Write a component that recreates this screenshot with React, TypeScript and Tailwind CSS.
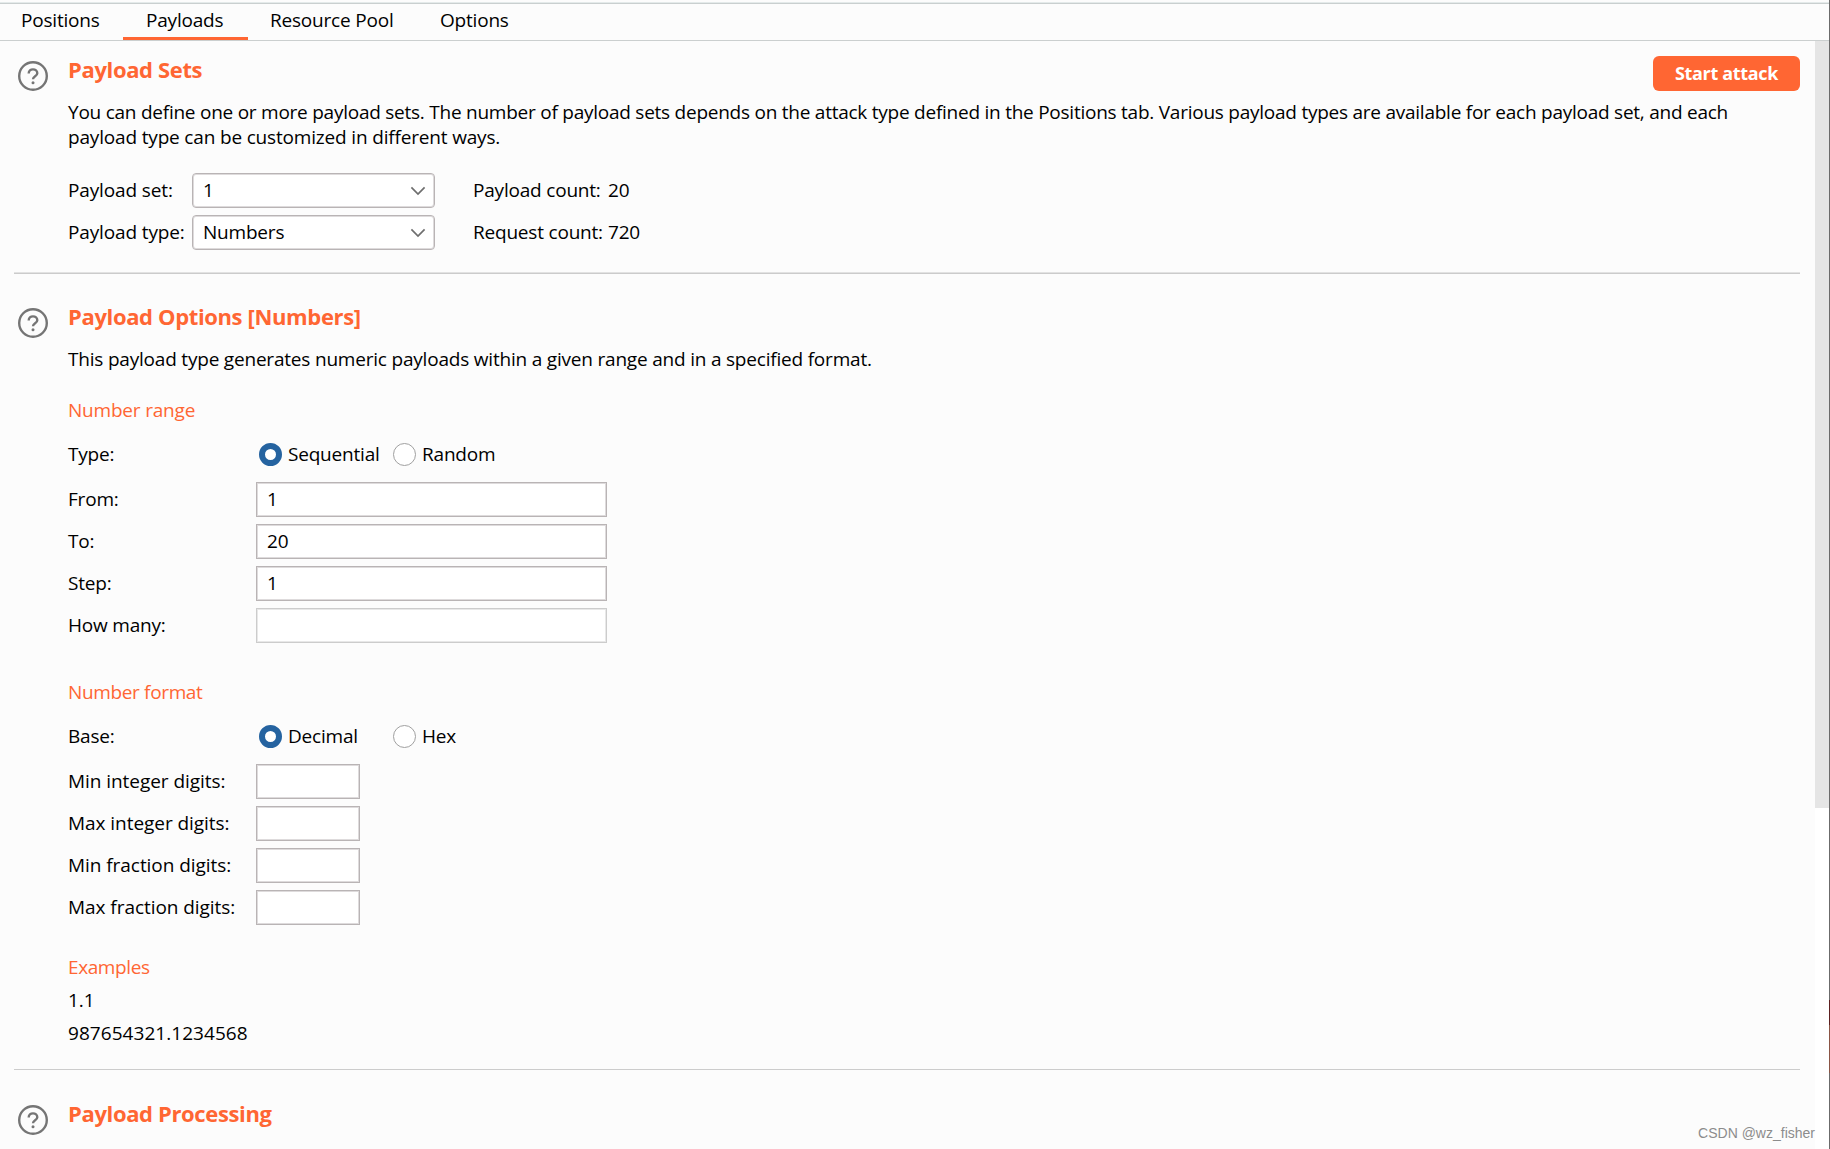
import type { ReactNode } from 'react';

const tabs = [
    { name: 'Positions', box: 'w-[123px] pl-[21px]', active: false },
    { name: 'Payloads', box: 'w-[125px] pl-[23px]', active: true },
    { name: 'Resource Pool', box: 'w-[170px] pl-[22px]', active: false },
    { name: 'Options', box: 'w-[120px] pl-[22px]', active: false },
];

const payloadRows = [
    { label: 'Payload set:', value: '1', countLabel: 'Payload count:', count: '20' },
    { label: 'Payload type:', value: 'Numbers', countLabel: 'Request count:', count: '720' },
];

const rangeFields = [
    { label: 'From:', value: '1', disabled: false },
    { label: 'To:', value: '20', disabled: false },
    { label: 'Step:', value: '1', disabled: false },
    { label: 'How many:', value: '', disabled: true },
];

const formatFields = ['Min integer digits:', 'Max integer digits:', 'Min fraction digits:', 'Max fraction digits:'];

function HelpIcon() {
    return (
        <svg width="30" height="30" viewBox="0 0 30 30" fill="none" stroke="#757575">
            <circle cx="15" cy="15" r="13.8" strokeWidth="2.4" />
            <path d="M10.7 12.5C10.7 9.9 12.6 8.4 15 8.4s4.3 1.6 4.3 3.8c0 3-4.3 3-4.3 6" strokeWidth="2.4" />
            <circle cx="15" cy="21.8" r="1.5" fill="#757575" stroke="none" />
        </svg>
    );
}

function Chevron() {
    return (
        <svg width="16" height="10" viewBox="0 0 16 10" fill="none" stroke="#6e6e6e" strokeWidth="1.7">
            <path d="M1.4 1.4L8 8l6.6-6.6" />
        </svg>
    );
}

function Section({ title, action, children }: { title: string; action?: ReactNode; children?: ReactNode }) {
    return (
        <section className="flex">
            <div className="w-[68px] shrink-0 pl-[18px] pt-[5px]">
                <HelpIcon />
            </div>
            <div className="flex-1 pr-[15px]">
                <div className="flex items-start justify-between">
                    <h2 className="text-[22px] leading-[27px] tracking-[-0.36px] font-bold text-[#ff6633]">{title}</h2>
                    {action}
                </div>
                {children}
            </div>
        </section>
    );
}

function Radio({ label, checked, className }: { label: string; checked?: boolean; className?: string }) {
    return (
        <label className={`flex items-center ${className ?? ''}`}>
            <span
                className={
                    checked
                        ? 'size-[23px] rounded-full border-[6px] border-[#2563a0] bg-white'
                        : 'size-[23px] rounded-full border border-[#a0a0a0] bg-white'
                }
            />
            <span className="pl-1.5">{label}</span>
        </label>
    );
}

export default function App() {
    return (
        <div className="relative flex h-[1149px] w-[1830px] overflow-hidden bg-[#fcfcfc] font-['Open_Sans',sans-serif] text-[19px] leading-[25px] tracking-[-0.2px] text-black">
            <div className="flex flex-1 flex-col">
                {/* Tab bar */}
                <div className="mt-0.5 h-px bg-[#e4eaea]" />
                <div className="h-px bg-[#c9cfcf]" />
                <nav className="flex h-[37px] border-b border-[#cbcfcf]">
                    {tabs.map((tab) => (
                        <div
                            key={tab.name}
                            className={`${tab.box} flex items-center border-b-[3px] ${tab.active ? 'border-[#ff6633]' : 'border-transparent'}`}
                        >
                            {tab.name}
                        </div>
                    ))}
                </nav>

                <div className="flex flex-1">
                    <main className="w-[1815px] pt-[15px]">
                        <Section
                            title="Payload Sets"
                            action={
                                <button className="h-[35px] w-[147px] rounded-md bg-[#ff6633] text-[18px] tracking-[-0.33px] font-bold text-white">
                                    Start attack
                                </button>
                            }
                        >
                            <p className="mt-[9px] tracking-[-0.245px]">
                                You can define one or more payload sets. The number of payload sets depends on the attack type defined in the Positions tab. Various payload types are available for each payload set, and each
                                <br />
                                <span className="tracking-[-0.17px]">payload type can be customized in different ways.</span>
                            </p>
                            <div className="mt-[23px] flex flex-col gap-[7px]">
                                {payloadRows.map((row) => (
                                    <div key={row.label} className="flex h-[35px] items-center">
                                        <span className="w-[124px] tracking-[-0.13px]">{row.label}</span>
                                        <div className="flex h-full w-[243px] items-center justify-between rounded border border-[#b9b4b5] bg-white pl-2.5 pr-2 shadow-[inset_0_0_0_1px_#dedbdc]">
                                            <span>{row.value}</span>
                                            <Chevron />
                                        </div>
                                        <span className="ml-[38px] w-[135px]">{row.countLabel}</span>
                                        <span>{row.count}</span>
                                    </div>
                                ))}
                            </div>
                        </Section>
                        <div className="ml-3.5 mr-[15px] mt-[22px] h-0.5 border-b border-[#cbcbcb] bg-[#e2e2e2]" />

                        <div className="h-[29px]" />
                        <Section title="Payload Options [Numbers]">
                            <p className="mt-[17px]">This payload type generates numeric payloads within a given range and in a specified format.</p>

                            <h3 className="mt-[26px] text-[#ff6633]">Number range</h3>
                            <div className="mt-5 flex h-[23px] items-center">
                                <span className="w-[191px]">Type:</span>
                                <Radio label="Sequential" checked className="w-[134px]" />
                                <Radio label="Random" />
                            </div>
                            <div className="mt-4 flex flex-col gap-[7px]">
                                {rangeFields.map((field) => (
                                    <div key={field.label} className="flex h-[35px] items-center">
                                        <span className="w-[188px]">{field.label}</span>
                                        <div
                                            className={`flex h-full w-[351px] items-center border bg-white pl-2.5 ${
                                                field.disabled
                                                    ? 'border-[#cccccc] shadow-[inset_0_0_0_1px_#e8e8e8]'
                                                    : 'border-[#b9b4b5] shadow-[inset_0_0_0_1px_#dedbdc]'
                                            }`}
                                        >
                                            {field.value}
                                        </div>
                                    </div>
                                ))}
                            </div>

                            <h3 className="mt-[37px] tracking-[-0.35px] text-[#ff6633]">Number format</h3>
                            <div className="mt-5 flex h-[23px] items-center">
                                <span className="w-[191px]">Base:</span>
                                <Radio label="Decimal" checked className="w-[134px]" />
                                <Radio label="Hex" />
                            </div>
                            <div className="mt-4 flex flex-col gap-[7px] tracking-[-0.05px]">
                                {formatFields.map((label) => (
                                    <div key={label} className="flex h-[35px] items-center">
                                        <span className="w-[188px]">{label}</span>
                                        <div className="h-full w-[104px] border border-[#b9b4b5] bg-white shadow-[inset_0_0_0_1px_#dedbdc]" />
                                    </div>
                                ))}
                            </div>

                            <h3 className="mt-[30px] tracking-[-0.4px] text-[#ff6633]">Examples</h3>
                            <p className="mt-2 tracking-normal">1.1</p>
                            <p className="mt-2 tracking-[0.05px]">987654321.1234568</p>
                        </Section>
                        <div className="ml-3.5 mr-[15px] mt-[23px] h-px bg-[#cccccc]" />

                        <div className="h-[30px]" />
                        <Section title="Payload Processing" />
                    </main>

                    {/* Scrollbar */}
                    <div className="w-3.5 bg-white">
                        <div className="h-[767px] bg-[#e5e5e5]" />
                    </div>
                </div>
            </div>

            {/* Window edge */}
            <div className="w-px bg-[#6b6b6b] pt-[1000px]">
                <div className="h-[25px] bg-[#5c2020]" />
                <div className="h-12 bg-[#8a5545]" />
            </div>

            <span className="absolute bottom-2 right-[15px] font-['Liberation_Sans',sans-serif] text-sm leading-4 tracking-normal text-[#8c8c8c]">
                CSDN @wz_fisher
            </span>
        </div>
    );
}
